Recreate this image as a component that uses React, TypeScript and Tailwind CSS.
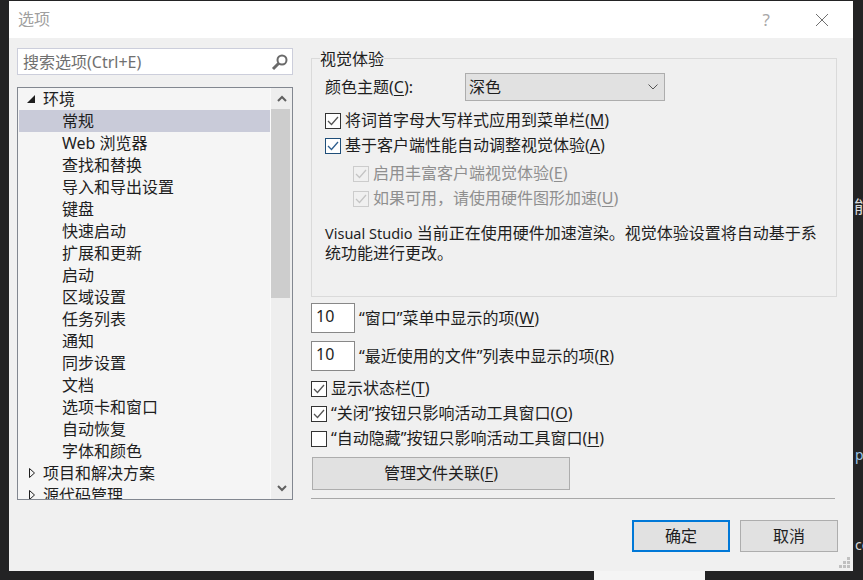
import React from 'react';

const FONT = "font-['Noto_Sans','Noto_Sans_CJK_SC',sans-serif]";

const treeItems = [
  '常规', 'Web 浏览器', '查找和替换', '导入和导出设置', '键盘', '快速启动', '扩展和更新', '启动',
  '区域设置', '任务列表', '通知', '同步设置', '文档', '选项卡和窗口', '自动恢复', '字体和颜色',
];

// label with the access key underlined, e.g. (C)
const Mn: React.FC<{ k: string }> = ({ k }) => (
  <span>(<span className="underline underline-offset-2">{k}</span>)</span>
);

const Check: React.FC<{ checked?: boolean; focus?: boolean; disabled?: boolean }> = ({ checked, focus, disabled }) => {
  const border = disabled ? 'border-[#cccccc]' : focus ? 'border-[#1f4e79]' : 'border-[#333333]';
  const stroke = disabled ? '#c4c4c4' : focus ? '#2f5f8f' : '#555555';
  return (
    <span className={`w-4 h-4 shrink-0 border ${border} ${disabled ? 'bg-[#f0f0f0]' : 'bg-white'} flex items-center justify-center`}>
      {checked && (
        <svg width="12" height="10" viewBox="0 0 12 10" fill="none">
          <path d="M1 5 L4.5 8.5 L11 1" stroke={stroke} strokeWidth="1.3" />
        </svg>
      )}
    </span>
  );
};

const CheckRow: React.FC<{
  checked?: boolean; focus?: boolean; disabled?: boolean; children: React.ReactNode; className?: string;
}> = ({ checked, focus, disabled, children, className }) => (
  <div className={`flex items-center gap-1 h-[25px] whitespace-nowrap ${disabled ? 'text-[#8f8f8f]' : ''} ${className ?? ''}`}>
    <Check checked={checked} focus={focus} disabled={disabled} />
    <span>{children}</span>
  </div>
);

const NumberRow: React.FC<{ children: React.ReactNode }> = ({ children }) => (
  <div className="flex items-center gap-[4px] h-[30px] whitespace-nowrap">
    <div className="w-[44px] h-[30px] bg-white border border-[#888888] pl-[4px] leading-[24px]">10</div>
    <span>{children}</span>
  </div>
);

const Chevron: React.FC<{ up?: boolean }> = ({ up }) => (
  <svg width="10" height="7" viewBox="0 0 10 7" fill="none">
    <path d={up ? 'M1 6 L5 2 L9 6' : 'M1 1 L5 5 L9 1'} stroke="#606060" strokeWidth="2" />
  </svg>
);

export default function App() {
  return (
    <div className={`relative w-[863px] h-[580px] overflow-hidden bg-[#232324] pl-[9px] pt-[1px] text-[16px] leading-[21px] text-[#1e1e1e] ${FONT}`}>
      {/* stuff of the window behind the dialog */}
      <div className="absolute left-[854px] top-[196px] text-[#d8d8d8] text-[17px]">能</div>
      <div className="absolute left-[855px] top-[444px] text-[#9cc4e4] text-[14px]">p</div>
      <div className="absolute left-[855px] top-[534px] text-[#d8d8d8] text-[14px]">ce</div>
      <div className="absolute left-[594px] top-[571px] w-[111px] h-[9px] bg-[#f4f4f4]" />

      <div className="relative w-[844px] h-[570px] bg-[#f0f0f0] flex flex-col">
        <div className="h-[37px] shrink-0 bg-white flex items-center pl-[9px] pr-[24px] text-[#a0a0a0]">
          <span className="flex-1">选项</span>
          <span className="text-[#a8a8a8] text-[17px] mr-[45px]">?</span>
          <svg width="14" height="14" viewBox="0 0 14 14" fill="none">
            <path d="M1 1 L13 13 M13 1 L1 13" stroke="#707070" strokeWidth="1" />
          </svg>
        </div>

        <div className="flex pl-2 h-[463px]">
          {/* left column */}
          <div className="w-[276px] shrink-0 pt-[10px] flex flex-col">
            <div className="h-[27px] bg-white border border-[#cccedb] flex items-center pl-[5px] pr-[3px] text-[#707070]">
              <span className="flex-1 whitespace-nowrap pt-[1px]">搜索选项(Ctrl+E)</span>
              <svg width="18" height="18" viewBox="0 0 18 18" fill="none">
                <circle cx="11" cy="7" r="4.5" stroke="#6a6a6a" strokeWidth="2" />
                <path d="M7.5 10.5 L2 16" stroke="#6a6a6a" strokeWidth="3" />
              </svg>
            </div>
            <div className="mt-[12px] h-[413px] border border-[#828790] bg-[#f5f5f5] flex overflow-hidden">
              <div className="flex-1 overflow-hidden pl-[1px]">
                <div className="h-[22px] flex items-center pl-[8px] gap-[8px]">
                  <svg width="8" height="8" viewBox="0 0 8 8"><path d="M8 0 V8 H0 Z" fill="#1e1e1e" /></svg>
                  <span>环境</span>
                </div>
                {treeItems.map((item, i) => (
                  <div key={item} className={`h-[22px] pl-[43px] leading-[23px] whitespace-nowrap ${i === 0 ? 'bg-[#c9cbd9]' : ''}`}>{item}</div>
                ))}
                {['项目和解决方案', '源代码管理'].map((item) => (
                  <div key={item} className="h-[22px] flex items-center pl-[10px] gap-[8px]">
                    <svg width="6" height="10" viewBox="0 0 6 10" fill="none"><path d="M0.5 0.5 L5.5 5 L0.5 9.5 Z" stroke="#1e1e1e" /></svg>
                    <span>{item}</span>
                  </div>
                ))}
              </div>
              <div className="w-[22px] shrink-0 bg-[#eeeeee] border-l border-[#fafafa] flex flex-col">
                <div className="h-[21px] flex items-center justify-center"><Chevron up /></div>
                <div className="h-[189px] w-[19px] bg-[#cdcdcd]" />
                <div className="flex-1" />
                <div className="h-[21px] flex items-center justify-center"><Chevron /></div>
              </div>
            </div>
          </div>

          {/* right column */}
          <div className="ml-[18px] w-[526px] pt-[20px]">
            <div className="relative h-[239px] border border-[#dadada] pl-[13px] pt-[14px]">
              <span className="absolute left-[8px] -top-[10px] bg-[#f0f0f0]">视觉体验</span>
              <div className="flex items-center h-[28px]">
                <span className="w-[140px]">颜色主题<Mn k="C" />:</span>
                <div className="w-[200px] h-[28px] bg-[#e1e1e1] border border-[#adadad] flex items-center pl-[3px] pr-[6px]">
                  <span className="flex-1">深色</span>
                  <svg width="10" height="6" viewBox="0 0 10 6" fill="none"><path d="M0.5 0.5 L5 5 L9.5 0.5" stroke="#555555" /></svg>
                </div>
              </div>
              <CheckRow checked className="mt-[7px]">将词首字母大写样式应用到菜单栏<Mn k="M" /></CheckRow>
              <CheckRow checked focus>基于客户端性能自动调整视觉体验<Mn k="A" /></CheckRow>
              <div className="pl-[28px] pt-[3px]">
                <CheckRow checked disabled>启用丰富客户端视觉体验<Mn k="E" /></CheckRow>
                <CheckRow checked disabled>如果可用，请使用硬件图形加速<Mn k="U" /></CheckRow>
              </div>
              <p className="mt-[12px] w-[495px] leading-[20px]">
                <span className="text-[14.5px]">Visual Studio</span> 当前正在使用硬件加速渲染。视觉体验设置将自动基于系统功能进行更改。
              </p>
            </div>

            <div className="mt-[6px] flex flex-col gap-[8px]">
              <NumberRow>“窗口”菜单中显示的项<Mn k="W" /></NumberRow>
              <NumberRow>“最近使用的文件”列表中显示的项<Mn k="R" /></NumberRow>
            </div>
            <div className="mt-[5px]">
              <CheckRow checked>显示状态栏<Mn k="T" /></CheckRow>
              <CheckRow checked>“关闭”按钮只影响活动工具窗口<Mn k="O" /></CheckRow>
              <CheckRow>“自动隐藏”按钮只影响活动工具窗口<Mn k="H" /></CheckRow>
            </div>
            <button className="ml-[1px] mt-[6px] w-[258px] h-[33px] bg-[#e1e1e1] border border-[#adadad] block text-center">
              管理文件关联<Mn k="F" />
            </button>
            <div className="mt-[8px] w-[524px] h-[1px] bg-[#a8a8a8]" />
          </div>
        </div>

        {/* footer */}
        <div className="relative flex-1 flex justify-end gap-[10px] pt-[19px] pr-[15px]">
          <button className="w-[98px] h-[32px] bg-[#e1e1e1] border-2 border-[#0078d7]">确定</button>
          <button className="w-[98px] h-[32px] bg-[#e1e1e1] border border-[#adadad]">取消</button>
          <svg className="absolute right-[2px] bottom-[2px]" width="12" height="12" viewBox="0 0 12 12" fill="#c0c0c0">
            <path d="M8 0h3v3H8z M4 4h3v3H4z M8 4h3v3H8z M0 8h3v3H0z M4 8h3v3H4z M8 8h3v3H8z" />
          </svg>
        </div>
      </div>
    </div>
  );
}
